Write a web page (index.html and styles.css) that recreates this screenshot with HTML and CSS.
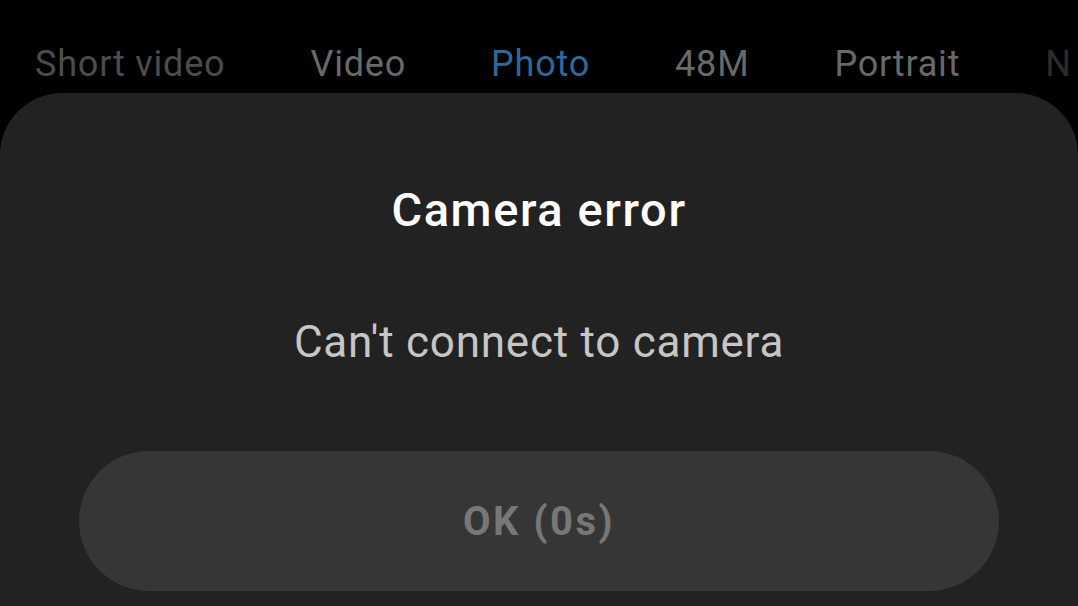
FILE: index.html
```html
<!DOCTYPE html>
<html lang="en">
<head>
<meta charset="utf-8">
<title>Camera error</title>
<link rel="stylesheet" href="styles.css">
</head>
<body>
<div class="screen">
  <nav class="modes">
    <span class="mode mode-far">Short video</span>
    <span class="mode">Video</span>
    <span class="mode mode-active">Photo</span>
    <span class="mode">48M</span>
    <span class="mode">Portrait</span>
    <span class="mode mode-edge">N</span>
  </nav>
  <section class="dialog">
    <h1 class="dialog-title">Camera error</h1>
    <p class="dialog-message">Can't connect to camera</p>
    <button class="dialog-button">OK (0s)</button>
  </section>
</div>
</body>
</html>
```

FILE: styles.css
```css
html, body {
  margin: 0;
  padding: 0;
  background: #000;
  height: 100%;
  overflow: hidden;
}
.screen {
  width: 1078px;
  height: 606px;
  display: flex;
  flex-direction: column;
  font-family: Roboto, "Liberation Sans", sans-serif;
  overflow: hidden;
}
.modes {
  height: 93px;
  box-sizing: border-box;
  padding: 47px 0 0 35px;
  display: flex;
  gap: 85px;
  white-space: nowrap;
  flex-shrink: 0;
}
.mode {
  font-size: 36px;
  line-height: 35px;
  letter-spacing: 0.8px;
  color: #696969;
}
.mode-far { color: #4c4c4c; }
.mode-active { color: #2d6999; }
.mode-edge { color: #2c2c2c; }
.dialog {
  flex: 1;
  background: #222222;
  border-radius: 62px 62px 0 0;
  display: flex;
  flex-direction: column;
  align-items: center;
  padding-top: 94px;
}
.dialog-title {
  margin: 0;
  font-size: 47px;
  line-height: 46px;
  font-weight: 500;
  letter-spacing: 1.6px;
  color: #ffffff;
}
.dialog-message {
  margin: 87px 0 0;
  font-size: 44px;
  line-height: 44px;
  letter-spacing: 0.75px;
  color: #c6c6c6;
}
.dialog-button {
  margin-top: 87px;
  width: 920px;
  height: 140px;
  border: none;
  border-radius: 70px;
  background: #363636;
  color: #777777;
  font-family: Roboto, "Liberation Sans", sans-serif;
  font-size: 40px;
  font-weight: 700;
  letter-spacing: 2.5px;
  padding: 0;
}
```
